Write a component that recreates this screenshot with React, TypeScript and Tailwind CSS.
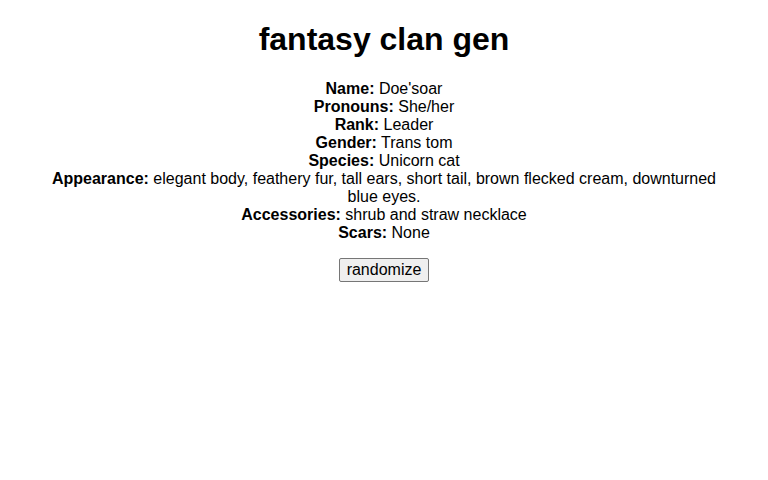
import { useState } from 'react';

type Clan = {
  name: string;
  pronouns: string;
  rank: string;
  gender: string;
  species: string;
  appearance: string;
  accessories: string;
  scars: string;
};

const start: Clan = {
  name: "Doe'soar",
  pronouns: 'She/her',
  rank: 'Leader',
  gender: 'Trans tom',
  species: 'Unicorn cat',
  appearance:
    'elegant body, feathery fur, tall ears, short tail, brown flecked cream, downturned blue eyes.',
  accessories: 'shrub and straw necklace',
  scars: 'None',
};

const pick = <T,>(list: T[]) => list[Math.floor(Math.random() * list.length)];

const Row = ({ label, value }: { label: string; value: string }) => (
  <div>
    <span className="font-bold">{label}:</span> {value}
  </div>
);

export default function App() {
  const [cat, setCat] = useState<Clan>(start);

  const randomize = () =>
    setCat({
      ...cat,
      rank: pick(['Leader', 'Deputy', 'Warrior', 'Apprentice', 'Medicine cat']),
      pronouns: pick(['She/her', 'He/him', 'They/them']),
      scars: pick(['None', 'Torn ear', 'Scarred muzzle']),
    });

  return (
    <div className="min-h-screen bg-white text-black font-['Liberation_Sans',Arial,sans-serif] text-center px-[48px]">
      <h1 className="text-[32px] font-bold leading-[37px] pt-[21px] mb-[22px]">fantasy clan gen</h1>
      <div className="text-[16px] leading-[18px]">
        <Row label="Name" value={cat.name} />
        <Row label="Pronouns" value={cat.pronouns} />
        <Row label="Rank" value={cat.rank} />
        <Row label="Gender" value={cat.gender} />
        <Row label="Species" value={cat.species} />
        <Row label="Appearance" value={cat.appearance} />
        <Row label="Accessories" value={cat.accessories} />
        <Row label="Scars" value={cat.scars} />
      </div>
      <button
        onClick={randomize}
        className="mt-[16px] h-[24px] px-[7px] text-[16px] leading-[18px] bg-[#efefef] border border-[#767676] rounded-[2px]"
      >
        randomize
      </button>
    </div>
  );
}
